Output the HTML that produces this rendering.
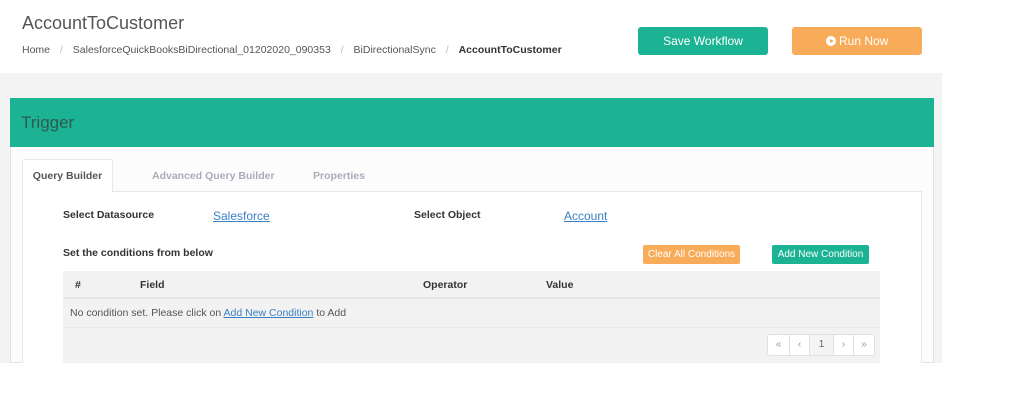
<!DOCTYPE html>
<html><head><style>
*{box-sizing:border-box;margin:0;padding:0}
body{width:1024px;height:407px;background:#fff;font-family:"Liberation Sans",sans-serif;position:relative;overflow:hidden;color:#333}
.a{position:absolute}
.lnk{color:#3a7fc4;text-decoration:underline}
</style></head><body>
<div class="a" style="left:22px;top:13px;font-size:18px;color:#555">AccountToCustomer</div>
<div class="a" style="left:22px;top:44px;font-size:10.5px;color:#555;white-space:nowrap">Home <span style="color:#bbb;margin:0 7px">/</span> SalesforceQuickBooksBiDirectional_01202020_090353 <span style="color:#bbb;margin:0 7px">/</span> BiDirectionalSync <span style="color:#bbb;margin:0 7px">/</span> <b style="color:#333">AccountToCustomer</b></div>
<div class="a" style="left:638px;top:27px;width:130px;height:28px;background:#1bb394;border-radius:3px;color:#fff;font-size:12px;text-align:center;line-height:28px">Save Workflow</div>
<div class="a" style="left:792px;top:27px;width:130px;height:28px;background:#f8ac59;border-radius:3px;color:#fff;font-size:12px;text-align:center;line-height:28px"><span style="display:inline-block;width:10px;height:10px;border-radius:50%;background:#fff;vertical-align:-1px;position:relative"><span style="position:absolute;left:4px;top:2.5px;border-left:4px solid #f8ac59;border-top:2.5px solid transparent;border-bottom:2.5px solid transparent"></span></span> Run Now</div>
<div class="a" style="left:0;top:73px;width:942px;height:290px;background:#f3f3f3"></div>
<div class="a" style="left:10px;top:98px;width:924px;height:265px;background:#fcfcfc;border:1px solid #e2e2e2;border-top:none"></div>
<div class="a" style="left:10px;top:98px;width:924px;height:49px;background:#1bb394"></div>
<div class="a" style="left:21px;top:113px;font-size:17px;color:#2f5a4e">Trigger</div>
<div class="a" style="left:22px;top:191px;width:900px;height:172px;border:1px solid #e7e7e7;border-bottom:none;background:#fff"></div>
<div class="a" style="left:22px;top:159px;width:91px;height:33px;background:#fff;border:1px solid #e7e7e7;border-bottom:none;border-radius:3px 3px 0 0;font-size:10.5px;font-weight:bold;color:#555;text-align:center;line-height:33px">Query Builder</div>
<div class="a" style="left:152px;top:170px;font-size:10.5px;font-weight:bold;color:#a8adb8">Advanced Query Builder</div>
<div class="a" style="left:313px;top:170px;font-size:10.5px;font-weight:bold;color:#a8adb8">Properties</div>
<div class="a" style="left:63px;top:209px;font-size:10.5px;font-weight:bold">Select Datasource</div>
<div class="a lnk" style="left:213px;top:209px;font-size:12px">Salesforce</div>
<div class="a" style="left:414px;top:209px;font-size:10.5px;font-weight:bold">Select Object</div>
<div class="a lnk" style="left:564px;top:209px;font-size:12px">Account</div>
<div class="a" style="left:63px;top:247px;font-size:10.5px;font-weight:bold">Set the conditions from below</div>
<div class="a" style="left:643px;top:245px;width:97px;height:19px;background:#f8ac59;border-radius:2px;color:#fff;font-size:10px;text-align:center;line-height:19px">Clear All Conditions</div>
<div class="a" style="left:772px;top:245px;width:97px;height:19px;background:#1bb394;border-radius:2px;color:#fff;font-size:10px;text-align:center;line-height:19px">Add New Condition</div>
<div class="a" style="left:63px;top:271px;width:817px;height:92px;background:#f2f2f2"></div>
<div class="a" style="left:63px;top:297px;width:817px;height:2px;background:#e6e6e6"></div>
<div class="a" style="left:63px;top:327px;width:817px;height:1px;background:#e8e8e8"></div>
<div class="a" style="left:75px;top:279px;font-size:10.5px;font-weight:bold">#</div>
<div class="a" style="left:140px;top:279px;font-size:10.5px;font-weight:bold">Field</div>
<div class="a" style="left:423px;top:279px;font-size:10.5px;font-weight:bold">Operator</div>
<div class="a" style="left:546px;top:279px;font-size:10.5px;font-weight:bold">Value</div>
<div class="a" style="left:70px;top:307px;font-size:10.5px;color:#555">No condition set. Please click on <span class="lnk">Add New Condition</span> to Add</div>
<div class="a" style="left:767px;top:334px;height:22px;display:flex;border:1px solid #e0e0e0;border-radius:3px;background:#fff;font-size:10px;color:#999;line-height:20px;text-align:center">
<span style="width:22px;border-right:1px solid #e0e0e0">«</span><span style="width:20px;border-right:1px solid #e0e0e0">‹</span><span style="width:24px;border-right:1px solid #e0e0e0;background:#f4f4f4;color:#666">1</span><span style="width:20px;border-right:1px solid #e0e0e0">›</span><span style="width:20px">»</span></div>
</body></html>
